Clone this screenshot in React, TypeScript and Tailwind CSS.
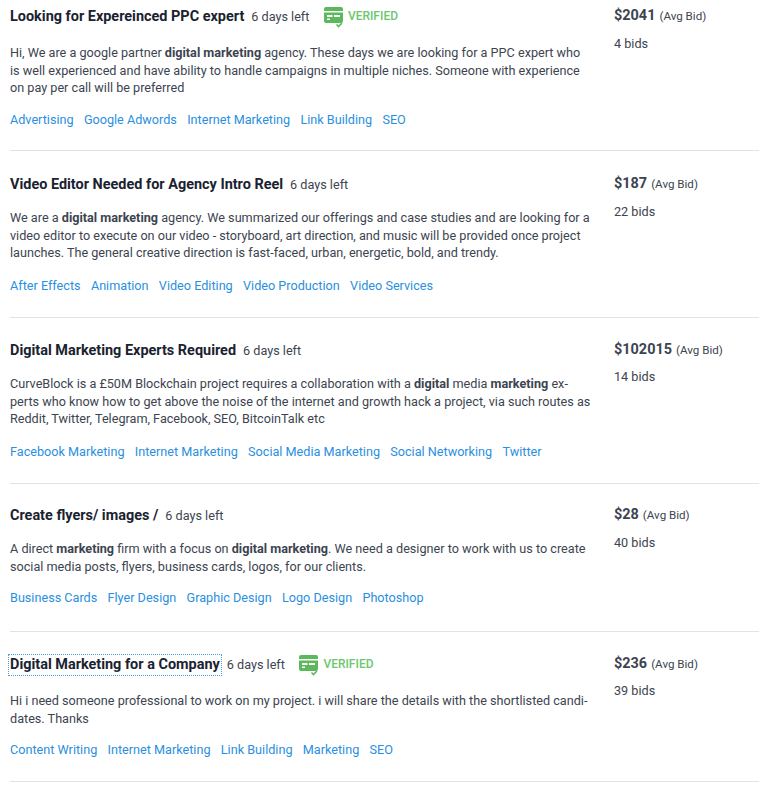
const jobs = [
  {
    title: 'Looking for Expereinced PPC expert',
    verified: true,
    desc: (
      <>
        Hi, We are a google partner <b>digital marketing</b> agency. These days we are looking for a PPC expert who is well experienced and have ability to handle campaigns in multiple niches. Someone with experience on pay per call will be preferred
      </>
    ),
    tags: ['Advertising', 'Google Adwords', 'Internet Marketing', 'Link Building', 'SEO'],
    price: '$2041',
    bids: '4 bids',
  },
  {
    title: 'Video Editor Needed for Agency Intro Reel',
    desc: (
      <>
        We are a <b>digital marketing</b> agency. We summarized our offerings and case studies and are looking for a video editor to execute on our video - storyboard, art direction, and music will be provided once project launches. The general creative direction is fast-faced, urban, energetic, bold, and trendy.
      </>
    ),
    tags: ['After Effects', 'Animation', 'Video Editing', 'Video Production', 'Video Services'],
    price: '$187',
    bids: '22 bids',
  },
  {
    title: 'Digital Marketing Experts Required',
    desc: (
      <>
        CurveBlock is a £50M Blockchain project requires a collaboration with a <b>digital</b> media <b>marketing</b> ex&shy;perts who know how to get above the noise of the internet and growth hack a project, via such routes as Reddit, Twitter, Telegram, Facebook, SEO, BitcoinTalk etc
      </>
    ),
    tags: ['Facebook Marketing', 'Internet Marketing', 'Social Media Marketing', 'Social Networking', 'Twitter'],
    price: '$102015',
    bids: '14 bids',
  },
  {
    title: 'Create flyers/ images /',
    desc: (
      <>
        A direct <b>marketing</b> firm with a focus on <b>digital marketing</b>. We need a designer to work with us to create social media posts, flyers, business cards, logos, for our clients.
      </>
    ),
    tags: ['Business Cards', 'Flyer Design', 'Graphic Design', 'Logo Design', 'Photoshop'],
    price: '$28',
    bids: '40 bids',
  },
  {
    title: 'Digital Marketing for a Company',
    verified: true,
    focused: true,
    desc: <>Hi i need someone professional to work on my project. i will share the details with the shortlisted candi&shy;dates. Thanks</>,
    tags: ['Content Writing', 'Internet Marketing', 'Link Building', 'Marketing', 'SEO'],
    price: '$236',
    bids: '39 bids',
  },
];

function VerifiedIcon() {
  return (
    <svg width="20" height="21" viewBox="0 0 20 21" className="shrink-0">
      <path d="M2 0h15a2 2 0 0 1 2 2v2H0V2a2 2 0 0 1 2-2z" fill="#5cb85c" />
      <path d="M0 5.500h19V14a2 2 0 0 1-2 2H2a2 2 0 0 1-2-2z" fill="#5cb85c" />
      <rect x="3" y="8" width="5.500" height="2" fill="#fff" />
      <rect x="10" y="8" width="6" height="2" fill="#fff" />
      <rect x="3" y="11.500" width="3" height="1.500" fill="#fff" />
      <path d="M12.500 17.500l2 2 3.500-3.500" fill="none" stroke="#5cb85c" strokeWidth="1.600" />
    </svg>
  );
}

export default function App() {
  return (
    <div className="min-h-[786px] bg-white pl-[10px] pr-[9px] font-['Roboto',sans-serif] text-[12.650px] leading-[17.500px] text-[#3c4450]">
      {jobs.map((job, i) => (
        <div key={job.title} className={`flex border-b border-[#e1e3e5] ${i === 0 ? 'h-[151px] pt-[7px]' : i === 1 ? 'h-[167px] pt-[24px]' : i === 2 ? 'h-[166px] pt-[23px]' : i === 3 ? 'h-[148px] pt-[22px]' : 'h-[150px] pt-[23px]'}`}>
          <div className="w-[604px] shrink-0">
            <div className="flex h-[20px] items-center">
              <span className={`text-[14.450px] font-bold text-[#1a2230] ${job.focused ? 'outline-1 outline-offset-1 outline-dotted outline-[#4a9fe0]' : ''}`}>{job.title}</span>
              <span className="ml-[7px]">6 days left</span>
              {job.verified && (
                <span className="ml-[14.500px] flex items-center gap-[4px] text-[12px] font-medium text-[#6cc76c]">
                  <VerifiedIcon />
                  VERIFIED
                </span>
              )}
            </div>
            <p className={`w-[581px] ${job.verified ? 'mt-[17px]' : 'mt-[14px]'}`}>{job.desc}</p>
            <div className={`flex gap-[10.300px] text-[#2a8fe0] ${i === 1 || i === 2 ? 'mt-[15px]' : 'mt-[14px]'}`}>
              {job.tags.map((tag) => (
                <span key={tag}>{tag}</span>
              ))}
            </div>
          </div>
          <div>
            <div className="flex h-[20px] items-baseline gap-[4px]">
              <span className="text-[14.450px] font-bold">{job.price}</span>
              <span className="text-[11.600px]">(Avg Bid)</span>
            </div>
            <div className={i === 2 || i === 4 ? 'mt-[7px]' : 'mt-[8px]'}>{job.bids}</div>
          </div>
        </div>
      ))}
    </div>
  );
}
